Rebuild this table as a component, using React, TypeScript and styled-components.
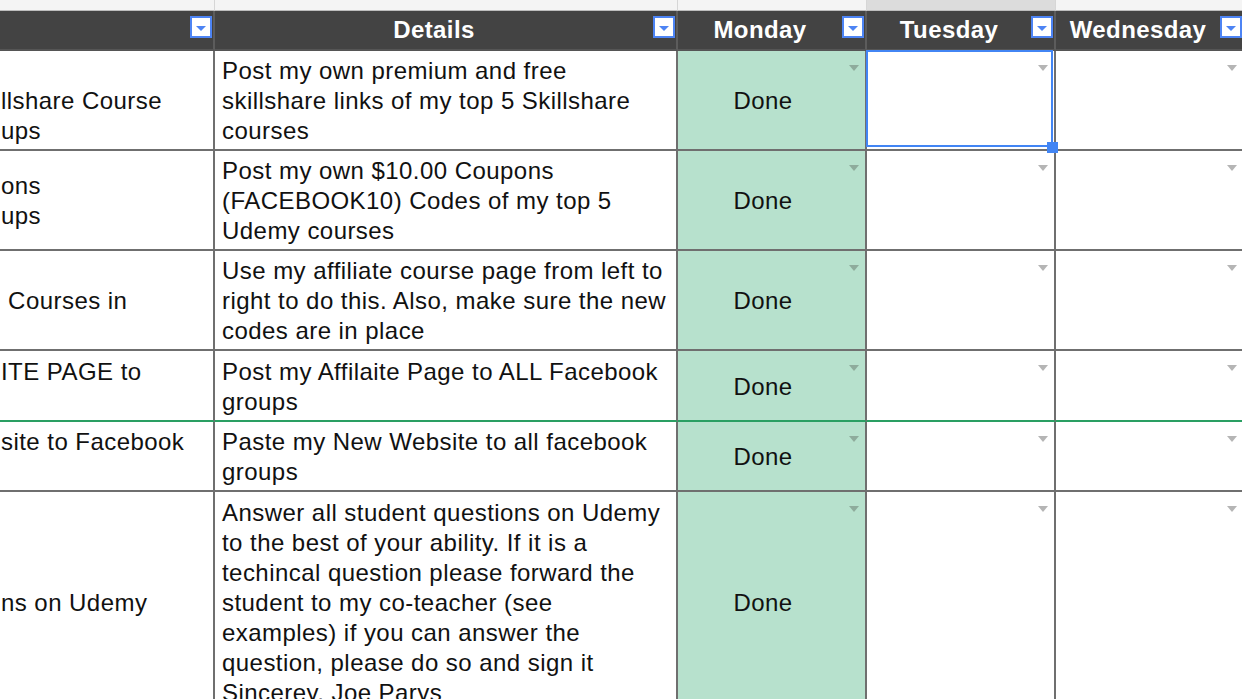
import React from "react";
import styled, { createGlobalStyle, css } from "styled-components";

const GlobalStyle = createGlobalStyle`
  html, body {
    margin: 0;
    padding: 0;
    background: #ffffff;
    overflow: hidden;
  }
  body {
    font-family: "Liberation Sans", Arial, sans-serif;
  }
`;

const GRID = "#6f6f6f";
const GREEN_LINE = "#2a9f63";

const Sheet = styled.div`
  display: grid;
  grid-template-columns: 215px 463px 189px 189px 189px;
  grid-template-rows: 11px 40px 100px 100px 100px 71px 70px 222px;
  width: 1245px;
  height: 699px;
  overflow: hidden;
  font-size: 24px;
  line-height: 30px;
  letter-spacing: 0.45px;
  color: #111;
`;

const StripCell = styled.div<{ $active?: boolean }>`
  box-sizing: border-box;
  background: ${(p) => (p.$active ? "#dcdcdc" : "#f4f4f4")};
  border-right: 1px solid #d6d6d6;
  border-bottom: 1px solid #bdbdbd;
`;

const HeaderCell = styled.div`
  box-sizing: border-box;
  display: flex;
  align-items: center;
  background: #434343;
  border-right: 2px solid #5c5c5c;
  border-bottom: 2px solid #555555;
  color: #ffffff;
`;

const HeaderTitle = styled.div`
  flex: 1;
  text-align: center;
  font-weight: bold;
  font-size: 24px;
  line-height: 38px;
  letter-spacing: 0.4px;
  white-space: nowrap;
  overflow: hidden;
`;

const FilterButton = styled.div`
  align-self: flex-start;
  box-sizing: border-box;
  width: 22px;
  height: 22px;
  margin: 5px 1px 0 0;
  border: 2px solid #4d84f4;
  background: #ffffff;
  display: flex;
  align-items: center;
  justify-content: center;
  padding-top: 2px;
  flex-shrink: 0;
`;

const FilterTriangle = styled.div`
  width: 0;
  height: 0;
  border-left: 5px solid transparent;
  border-right: 5px solid transparent;
  border-top: 5px solid #4d84f4;
`;

const Cell = styled.div<{
  $green?: boolean;
  $greenLine?: boolean;
  $center?: boolean;
  $selected?: boolean;
}>`
  box-sizing: border-box;
  position: relative;
  display: flex;
  flex-direction: column;
  justify-content: center;
  overflow: visible;
  background: ${(p) => (p.$green ? "#b7e1cd" : "#ffffff")};
  border-right: 2px solid ${GRID};
  border-bottom: 2px solid ${(p) => (p.$greenLine ? GREEN_LINE : GRID)};
  padding: 2px 7px 0 7px;
  text-align: ${(p) => (p.$center ? "center" : "left")};
  ${(p) =>
    p.$center &&
    css`
      padding-right: 24px;
    `}
  ${(p) =>
    p.$selected &&
    css`
      z-index: 2;
      &::after {
        content: "";
        position: absolute;
        left: -1px;
        top: -1px;
        right: 1px;
        bottom: 2px;
        border: 2px solid #4285f4;
        pointer-events: none;
      }
      &::before {
        content: "";
        position: absolute;
        right: -4px;
        bottom: -4px;
        width: 11px;
        height: 11px;
        background: #4285f4;
        z-index: 3;
      }
    `}
`;

const ClipCell = styled(Cell)`
  padding: 2px 0 0 1px;
  overflow: hidden;
  white-space: pre;
`;

const Line = styled.div`
  white-space: pre;
`;

const DropArrow = styled.div<{ $onGreen?: boolean }>`
  position: absolute;
  top: 14px;
  right: 6px;
  width: 0;
  height: 0;
  border-left: 5px solid transparent;
  border-right: 5px solid transparent;
  border-top: 6px solid ${(p) => (p.$onGreen ? "#8eab9c" : "#b5b5b5")};
`;

type Row = {
  title: string[];
  details: string[];
  greenLine?: boolean;
};

const rows: Row[] = [
  {
    title: ["\u00a0", "llshare Course", "ups"],
    details: [
      "Post my own premium and free",
      "skillshare links of my top 5 Skillshare",
      "courses",
    ],
  },
  {
    title: ["ons", "ups"],
    details: [
      "Post my own $10.00 Coupons",
      "(FACEBOOK10) Codes of my top 5",
      "Udemy courses",
    ],
  },
  {
    title: [" Courses in"],
    details: [
      "Use my affiliate course page from left to",
      "right to do this. Also, make sure the new",
      "codes are in place",
    ],
  },
  {
    title: ["ITE PAGE to", "\u00a0"],
    details: ["Post my Affilaite Page to ALL Facebook", "groups"],
    greenLine: true,
  },
  {
    title: ["site to Facebook", "\u00a0"],
    details: ["Paste my New Website to all facebook", "groups"],
  },
  {
    title: ["ns on Udemy"],
    details: [
      "Answer all student questions on Udemy",
      "to the best of your ability. If it is a",
      "techincal question please forward the",
      "student to my co-teacher (see",
      "examples) if you can answer the",
      "question, please do so and sign it",
      "Sincerey, Joe Parys",
    ],
  },
];

const headers = ["", "Details", "Monday", "Tuesday", "Wednesday"];

export default function App() {
  return (
    <>
      <GlobalStyle />
      <Sheet>
        {headers.map((_, i) => (
          <StripCell key={`s${i}`} $active={i === 3} />
        ))}
        {headers.map((h, i) => (
          <HeaderCell key={`h${i}`}>
            <HeaderTitle>{h}</HeaderTitle>
            <FilterButton>
              <FilterTriangle />
            </FilterButton>
          </HeaderCell>
        ))}
        {rows.map((r, ri) => (
          <React.Fragment key={ri}>
            <ClipCell $greenLine={r.greenLine}>
              {r.title.map((t, i) => (
                <Line key={i}>{t}</Line>
              ))}
            </ClipCell>
            <Cell $greenLine={r.greenLine}>
              {r.details.map((t, i) => (
                <Line key={i}>{t}</Line>
              ))}
            </Cell>
            <Cell $green $center $greenLine={r.greenLine}>
              Done
              <DropArrow $onGreen />
            </Cell>
            <Cell $greenLine={r.greenLine} $selected={ri === 0}>
              <DropArrow />
            </Cell>
            <Cell $greenLine={r.greenLine}>
              <DropArrow />
            </Cell>
          </React.Fragment>
        ))}
      </Sheet>
    </>
  );
}
